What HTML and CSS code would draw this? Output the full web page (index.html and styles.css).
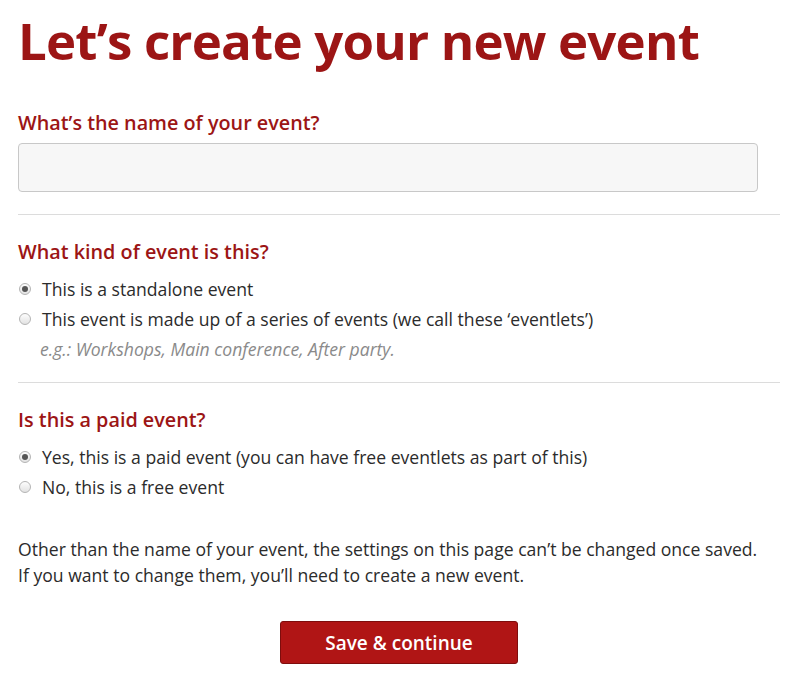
FILE: index.html
```html
<!DOCTYPE html>
<html lang="en">
<head>
<meta charset="utf-8">
<title>New event</title>
<link rel="stylesheet" href="styles.css">
</head>
<body>
<main class="page">
  <h1 class="title">Let’s create your new event</h1>

  <section class="section first">
    <h2 class="question">What’s the name of your event?</h2>
    <input class="text-input" type="text">
  </section>

  <section class="section">
    <h2 class="question">What kind of event is this?</h2>
    <div class="options">
      <label class="option"><span class="radio checked"></span>This is a standalone event</label>
      <label class="option"><span class="radio"></span>This event is made up of a series of events (we call these ‘eventlets’)</label>
      <p class="hint">e.g.: Workshops, Main conference, After party.</p>
    </div>
  </section>

  <section class="section">
    <h2 class="question">Is this a paid event?</h2>
    <div class="options">
      <label class="option"><span class="radio checked"></span>Yes, this is a paid event (you can have free eventlets as part of this)</label>
      <label class="option"><span class="radio"></span>No, this is a free event</label>
    </div>
  </section>

  <p class="note">Other than the name of your event, the settings on this page can’t be changed once saved. If you want to change them, you’ll need to create a new event.</p>

  <div class="actions">
    <button class="btn-primary" type="button">Save &amp; continue</button>
  </div>
</main>
</body>
</html>
```

FILE: styles.css
```css
* { box-sizing: border-box; }

html, body {
  margin: 0;
  padding: 0;
  background: #fff;
}

body {
  font-family: "Open Sans", "Liberation Sans", sans-serif;
  font-size: 17.6px;
  color: #2b2b2b;
}

.page {
  padding: 9px 5px 20px 18px;
}

.title {
  margin: 0;
  font-size: 51px;
  line-height: 62px;
  font-weight: 700;
  color: #9c1515;
  letter-spacing: -0.8px;
}

.section {
  border-top: 1px solid #dcdcdc;
  padding-top: 24px;
  padding-bottom: 18px;
}

.section.first {
  border-top: none;
  padding-top: 39px;
  padding-bottom: 22px;
}

.question {
  margin: 0;
  font-size: 19.8px;
  line-height: 26px;
  font-weight: 600;
  color: #9c1515;
}

.text-input {
  display: block;
  margin-top: 7px;
  width: 740px;
  height: 49px;
  background: #f7f7f7;
  border: 1px solid #c8c8c8;
  border-radius: 4px;
  font: inherit;
  padding: 0 12px;
}

.options {
  margin-top: 9px;
}

.option {
  display: flex;
  align-items: center;
  height: 30px;
  line-height: 30px;
}

.radio {
  width: 12px;
  height: 12px;
  margin-left: 1px;
  margin-right: 11px;
  border-radius: 50%;
  border: 1px solid #b4b4b4;
  background: linear-gradient(#fdfdfd, #e2e2e2);
  display: flex;
  align-items: center;
  justify-content: center;
  flex: none;
}

.radio.checked::after {
  content: "";
  width: 6px;
  height: 6px;
  border-radius: 50%;
  background: #555;
}

.hint {
  margin: 0;
  padding-left: 22px;
  line-height: 30px;
  font-style: italic;
  color: #8a8a8a;
}

.note {
  margin: 16px 0 0;
  max-width: 750px;
  line-height: 26px;
}

.actions {
  display: flex;
  justify-content: center;
  margin-top: 33px;
}

.btn-primary {
  width: 238px;
  height: 43px;
  background: #b01515;
  border: 1px solid #7e0d0d;
  border-radius: 3px;
  color: #fff;
  font-family: "Open Sans", "Liberation Sans", sans-serif;
  font-size: 19px;
  font-weight: 600;
}
```
